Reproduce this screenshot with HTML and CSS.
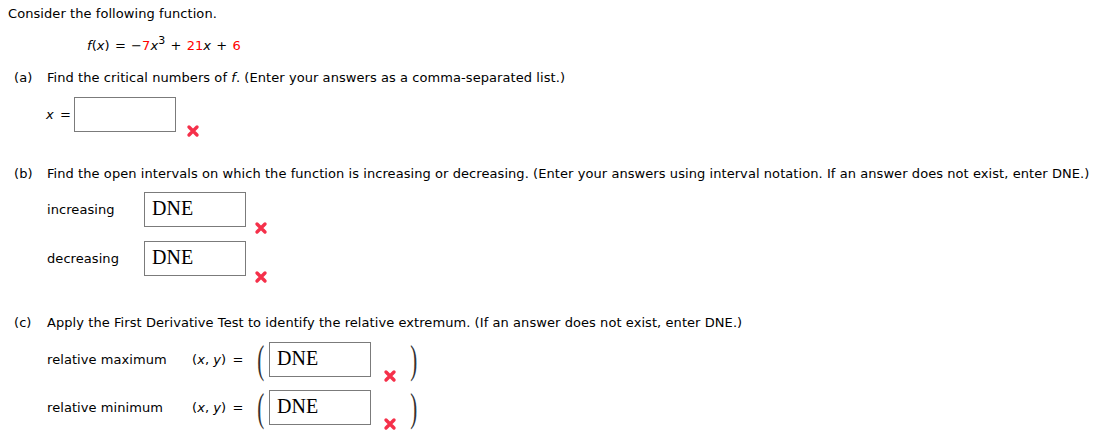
FILE: index.html
```html
<!DOCTYPE html>
<html lang="en">
<head>
    <meta charset="UTF-8">
    <title>Critical numbers</title>
    <link rel="stylesheet" href="styles.css">
</head>
<body>
<div class="page">
    <p class="intro">Consider the following function.</p>
    <p class="func"><i>f</i>(<i>x</i>) <span class="op">=</span> −<span class="red">7</span><i>x</i><sup>3</sup> <span class="op">+</span> <span class="red">21</span><i>x</i> <span class="op">+</span> <span class="red">6</span></p>

    <!-- (a) -->
    <div class="part part-a">
        <div class="part-head">
            <span class="letter">(a)</span>
            <span>Find the critical numbers of <i>f</i>. (Enter your answers as a comma-separated list.)</span>
        </div>
        <div class="row row-a">
            <span class="var"><i>x</i> <span class="op">=</span></span>
            <span class="box"></span>
            <span class="mark"><svg viewBox="0 0 14 14"><path d="M3 3 L11 11 M11 3 L3 11"/></svg></span>
        </div>
    </div>

    <!-- (b) -->
    <div class="part part-b">
        <div class="part-head">
            <span class="letter">(b)</span>
            <span>Find the open intervals on which the function is increasing or decreasing. (Enter your answers using interval notation. If an answer does not exist, enter DNE.)</span>
        </div>
        <div class="row row-b">
            <span class="label">increasing</span>
            <span class="box">DNE</span>
            <span class="mark"><svg viewBox="0 0 14 14"><path d="M3 3 L11 11 M11 3 L3 11"/></svg></span>
        </div>
        <div class="row row-b">
            <span class="label">decreasing</span>
            <span class="box">DNE</span>
            <span class="mark"><svg viewBox="0 0 14 14"><path d="M3 3 L11 11 M11 3 L3 11"/></svg></span>
        </div>
    </div>

    <!-- (c) -->
    <div class="part part-c">
        <div class="part-head">
            <span class="letter">(c)</span>
            <span>Apply the First Derivative Test to identify the relative extremum. (If an answer does not exist, enter DNE.)</span>
        </div>
        <div class="row row-c">
            <span class="label">relative maximum</span>
            <span class="pair">(<i>x</i>, <i>y</i>) <span class="op">=</span></span>
            <span class="paren">(</span>
            <span class="box">DNE</span>
            <span class="mark"><svg viewBox="0 0 14 14"><path d="M3 3 L11 11 M11 3 L3 11"/></svg></span>
            <span class="paren paren-r">)</span>
        </div>
        <div class="row row-c">
            <span class="label">relative minimum</span>
            <span class="pair">(<i>x</i>, <i>y</i>) <span class="op">=</span></span>
            <span class="paren">(</span>
            <span class="box">DNE</span>
            <span class="mark"><svg viewBox="0 0 14 14"><path d="M3 3 L11 11 M11 3 L3 11"/></svg></span>
            <span class="paren paren-r">)</span>
        </div>
    </div>
</div>
</body>
</html>
```

FILE: styles.css
```css
* {
    margin: 0;
    padding: 0;
}

body {
    background: #fff;
    color: #000;
    font-family: "DejaVu Sans", Verdana, sans-serif;
    font-size: 13px;
    line-height: 16px;
    letter-spacing: 0.07px;
}

.page {
    padding: 6px 8px;
}

.red {
    color: #ff0000;
}

.op {
    margin: 0 2px;
}

.func {
    margin-top: 16px;
    padding-left: 79px;
}

.func .op {
    margin: 0 1px;
}

.func sup {
    font-size: 11px;
    line-height: 0;
    vertical-align: 6px;
}

.part-head {
    display: flex;
    padding-left: 6px;
}

.part-head .letter {
    width: 33px;
    flex: none;
}

.part-a {
    margin-top: 16px;
}

.part-b {
    margin-top: 28px;
}

.part-c {
    margin-top: 31px;
}

.row {
    display: flex;
    align-items: flex-start;
    padding-left: 39px;
    line-height: 35px;
}

.part-a .row {
    margin-top: 11px;
}

.part-b .part-head + .row {
    margin-top: 10px;
}

.part-b .row + .row {
    margin-top: 6px;
}

.part-c .part-head + .row {
    margin-top: 11px;
}

.part-c .row + .row {
    margin-top: 7px;
}

.row-a {
    padding-left: 38px;
}

.row .var {
    width: 28px;
    flex: none;
}

.row .label {
    width: 97px;
    flex: none;
}

.row-c .label {
    width: 145px;
}

.row .pair {
    width: 64px;
    flex: none;
}

.box {
    display: block;
    flex: none;
    width: 100px;
    height: 33px;
    border: 1px solid #7b7b7b;
    font-family: "Liberation Serif", "Times New Roman", serif;
    font-size: 20px;
    line-height: 30px;
    letter-spacing: 0;
    text-indent: 7px;
}

.mark {
    margin-top: 27px;
    margin-left: 10px;
    width: 14px;
    height: 14px;
}

.row-b .mark {
    margin-top: 29px;
    margin-left: 8px;
}

.row-c .mark {
    margin-left: 12px;
}

.mark svg {
    display: block;
    width: 14px;
    height: 14px;
    fill: none;
    stroke: #f5304a;
    stroke-width: 3.4;
    stroke-linecap: round;
}

.paren {
    font-family: "Liberation Serif", "Times New Roman", serif;
    font-size: 28px;
    color: #333;
    transform: scale(0.75, 1.45);
    width: 9px;
    text-align: center;
    margin-right: 4px;
}

.paren-r {
    margin-left: 12px;
    margin-right: 0;
}
```
